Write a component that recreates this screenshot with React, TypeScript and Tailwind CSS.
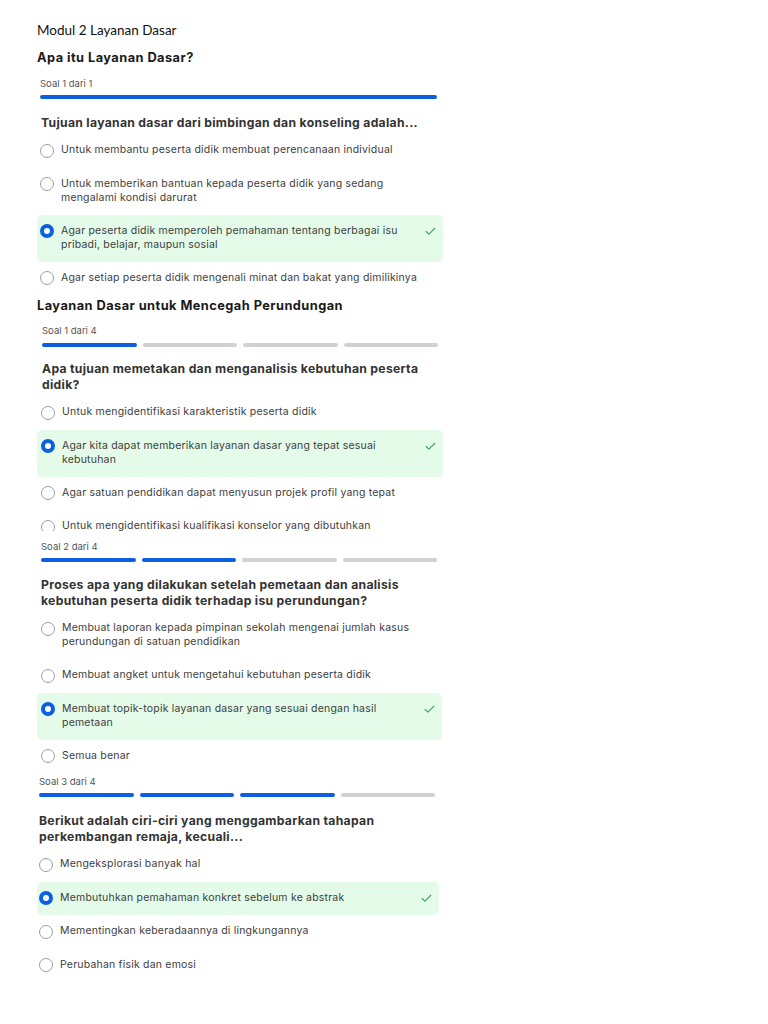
import { Check } from "lucide-react";

type Option = { text: string; correct?: boolean; clip?: boolean };

type Section = {
  heading?: string;
  headingClass?: string;
  labelClass: string;
  label: string;
  done: number;
  total: number;
  barClass: string;
  question: string;
  questionClass: string;
  optionsClass: string;
  rowPad: string;
  options: Option[];
};

const sections: Section[] = [
  {
    heading: "Apa itu Layanan Dasar?",
    headingClass: "mt-[12px]",
    label: "Soal 1 dari 1",
    labelClass: "mt-[12px] pl-[3px]",
    done: 1,
    total: 1,
    barClass: "mt-[5px] pl-[3px] pr-[6px]",
    question: "Tujuan layanan dasar dari bimbingan dan konseling adalah...",
    questionClass: "mt-[16px] pl-[4px]",
    optionsClass: "mt-[3px]",
    rowPad: "pl-[3px]",
    options: [
      { text: "Untuk membantu peserta didik membuat perencanaan individual" },
      { text: "Untuk memberikan bantuan kepada peserta didik yang sedang mengalami kondisi darurat" },
      { text: "Agar peserta didik memperoleh pemahaman tentang berbagai isu pribadi, belajar, maupun sosial", correct: true },
      { text: "Agar setiap peserta didik mengenali minat dan bakat yang dimilikinya" },
    ],
  },
  {
    heading: "Layanan Dasar untuk Mencegah Perundungan",
    headingClass: "mt-[3px]",
    label: "Soal 1 dari 4",
    labelClass: "mt-[11px] pl-[5px]",
    done: 1,
    total: 4,
    barClass: "mt-[6px] pl-[5px] pr-[5px]",
    question: "Apa tujuan memetakan dan menganalisis kebutuhan peserta didik?",
    questionClass: "mt-[14px] pl-[5px]",
    optionsClass: "mt-[3px]",
    rowPad: "pl-[4px]",
    options: [
      { text: "Untuk mengidentifikasi karakteristik peserta didik" },
      { text: "Agar kita dapat memberikan layanan dasar yang tepat sesuai kebutuhan", correct: true },
      { text: "Agar satuan pendidikan dapat menyusun projek profil yang tepat" },
      { text: "Untuk mengidentifikasi kualifikasi konselor yang dibutuhkan", clip: true },
    ],
  },
  {
    label: "Soal 2 dari 4",
    labelClass: "mt-[10px] pl-[4px]",
    done: 2,
    total: 4,
    barClass: "mt-[5px] pl-[4px] pr-[6px]",
    question: "Proses apa yang dilakukan setelah pemetaan dan analisis kebutuhan peserta didik terhadap isu perundungan?",
    questionClass: "mt-[15px] pl-[4px] pr-[40px]",
    optionsClass: "mt-[3px] pr-[1px]",
    rowPad: "pl-[4px]",
    options: [
      { text: "Membuat laporan kepada pimpinan sekolah mengenai jumlah kasus perundungan di satuan pendidikan" },
      { text: "Membuat angket untuk mengetahui kebutuhan peserta didik" },
      { text: "Membuat topik-topik layanan dasar yang sesuai dengan hasil pemetaan", correct: true },
      { text: "Semua benar" },
    ],
  },
  {
    label: "Soal 3 dari 4",
    labelClass: "mt-[3px] pl-[2px]",
    done: 3,
    total: 4,
    barClass: "mt-[5px] pl-[2px] pr-[8px]",
    question: "Berikut adalah ciri-ciri yang menggambarkan tahapan perkembangan remaja, kecuali...",
    questionClass: "mt-[16px] pl-[2px] pr-[60px]",
    optionsClass: "mt-[3px] pr-[4px]",
    rowPad: "pl-[2px]",
    options: [
      { text: "Mengeksplorasi banyak hal" },
      { text: "Membutuhkan pemahaman konkret sebelum ke abstrak", correct: true },
      { text: "Mementingkan keberadaannya di lingkungannya" },
      { text: "Perubahan fisik dan emosi" },
    ],
  },
];

function Radio({ on }: { on?: boolean }) {
  if (on) {
    return (
      <span className="mt-[0.5px] box-border block h-[14px] w-[14px] shrink-0 rounded-full border-[4px] border-[#0b5fe0] bg-white" />
    );
  }
  return (
    <span className="mt-[0.5px] box-border block h-[14px] w-[14px] shrink-0 rounded-full border border-[#9a9ea4] bg-white" />
  );
}

function OptionRow({ opt, pad }: { opt: Option; pad: string }) {
  return (
    <div className={opt.clip ? "h-[21px] overflow-hidden" : ""}>
      <div
        className={
          "flex items-start rounded-[5px] pb-[10px] pr-[6px] pt-[9px] " +
          pad +
          (opt.correct ? " bg-[#e3fbe8]" : "")
        }
      >
        <Radio on={opt.correct} />
        <p
          className={
            "ml-[7px] flex-1 text-[10.5px] leading-[14px] tracking-[0.2px] text-[#3d3d40] " +
            (opt.correct ? "pr-[24px]" : "pr-0")
          }
        >
          {opt.text}
        </p>
        {opt.correct && (
          <Check className="mt-[1px] h-[13px] w-[13px] shrink-0 text-[#3ea461]" strokeWidth={2} />
        )}
      </div>
    </div>
  );
}

function Progress({ done, total }: { done: number; total: number }) {
  return (
    <div className="flex gap-[6px]">
      {Array.from({ length: total }).map((_, i) => (
        <div
          key={i}
          className={
            "h-[4px] flex-1 rounded-full " + (i < done ? "bg-[#0b5fe0]" : "bg-[#d0d1d5]")
          }
        />
      ))}
    </div>
  );
}

export default function App() {
  return (
    <div className="min-h-[1024px] w-[768px] bg-white pl-[37px] pt-[22px] font-['Inter',sans-serif]">
      <div className="w-[406px]">
        <h1 className="font-['Lato',sans-serif] text-[13.5px] leading-[16px] text-[#111]">
          Modul 2 Layanan Dasar
        </h1>
        {sections.map((s, idx) => (
          <section key={idx}>
            {s.heading && (
              <h2 className={"text-[12.8px] font-bold leading-[16px] tracking-[0.45px] text-[#1a1a1a] " + s.headingClass}>
                {s.heading}
              </h2>
            )}
            <div className={"text-[9.5px] leading-[12px] text-[#555] " + s.labelClass}>{s.label}</div>
            <div className={s.barClass}>
              <Progress done={s.done} total={s.total} />
            </div>
            <h3 className={"text-[12.2px] font-bold leading-[16px] tracking-[0.3px] text-[#333] " + s.questionClass}>
              {s.question}
            </h3>
            <div className={s.optionsClass}>
              {s.options.map((o, i) => (
                <OptionRow key={i} opt={o} pad={s.rowPad} />
              ))}
            </div>
          </section>
        ))}
      </div>
    </div>
  );
}
